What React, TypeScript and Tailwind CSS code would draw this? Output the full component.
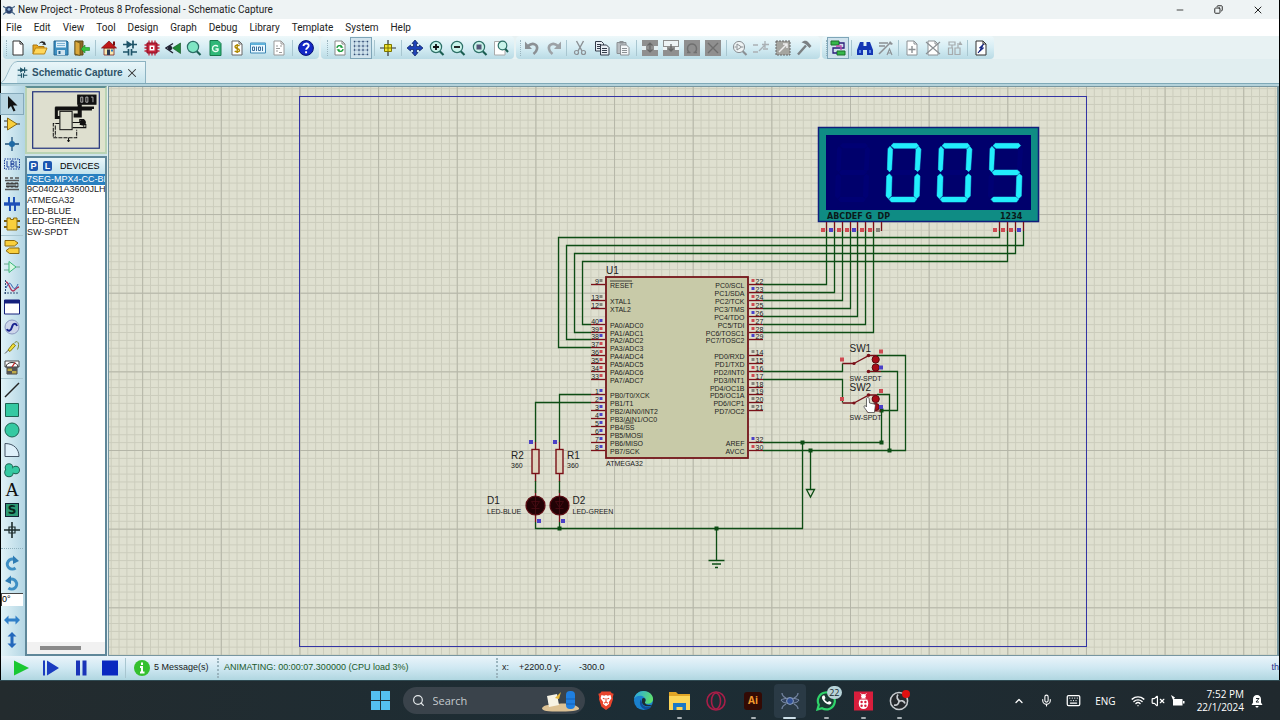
import React from "react";
import { Minus, Copy, X, Search, ChevronUp, Mic, Keyboard, Wifi, VolumeX } from "lucide-react";

type Kids = { children: React.ReactNode };

/* ---------- small icon helpers ---------- */
const Ic = ({ children, size = 16 }: Kids & { size?: number }) => (
  <svg width={size} height={size} viewBox="0 0 16 16" fill="none" className="shrink-0" aria-hidden="true">
    {children}
  </svg>
);

const Page = ({ stroke = "#333", children }: { stroke?: string; children?: React.ReactNode }) => (
  <Ic>
    <path d="M3 1h7l3 3v11H3z" fill="#fff" stroke={stroke} />
    <path d="M10 1v3h3" stroke={stroke} />
    {children}
  </Ic>
);

const Lens = ({ children, fill = "#c9f3ea" }: { children?: React.ReactNode; fill?: string }) => (
  <Ic>
    <path d="M10.5 11l4 4" stroke="#1b5e52" strokeWidth="2.2" />
    <circle cx="7" cy="7" r="5.6" fill={fill} stroke="#2c6f66" strokeWidth="1.2" />
    {children}
  </Ic>
);

const Caps = ({ size }: { size?: number }) => (
  <Ic size={size}>
    <path d="M1 4.500h14M1 12h5M10 12h5M6.500 9v6.500M9.500 9v6.500" stroke="#1e5468" strokeWidth="1.700" />
    <path d="M4.500 .5v8l6-4z" fill="#1e5468" />
    <path d="M11 .5v8" stroke="#1e5468" strokeWidth="1.700" />
  </Ic>
);

type Tool = { label: string; icon: React.ReactNode; active?: boolean } | "sep";

const groupA: Tool[] = [
  { label: "New project", icon: <Page /> },
  {
    label: "Open project",
    icon: (
      <Ic>
        <path d="M1 14V5h4l1.500 1.500H12V9" fill="#e9a91f" stroke="#a87512" />
        <path d="M1 14l2.500-6H15l-2.500 6z" fill="#ffd75a" stroke="#b98517" />
        <path d="M7 4c1-3 4-3.500 5.500-1.500V1l1.500 4-4-.5 1.500-1C10 2.500 8.500 2.500 7 4z" fill="#222" />
      </Ic>
    ),
  },
  {
    label: "Save project",
    icon: (
      <Ic>
        <path d="M1 1h13l1 1v13H1z" fill="#3d8fc0" stroke="#24658f" />
        <path d="M3 1.500h10v6H3z" fill="#dff0fa" />
        <path d="M4 3.500h8M4 5.500h8" stroke="#7fb4d3" />
        <path d="M4 10h8v5H4z" fill="#cfe3ef" />
        <path d="M5.500 11h2v3h-2z" fill="#24658f" />
      </Ic>
    ),
  },
  {
    label: "Close project",
    icon: (
      <Ic>
        <path d="M1 1h8v14H1z" fill="#8a6a24" stroke="#5f4a16" />
        <path d="M1 1l5 2v12.500L1 14z" fill="#d9a83c" stroke="#6b5418" strokeWidth=".8" />
        <path d="M7 9l4-4v2.500h4.500v3H11V13z" fill="#35c23e" stroke="#1d8a2a" strokeWidth=".6" />
      </Ic>
    ),
  },
  "sep",
  {
    label: "Home page",
    icon: (
      <Ic>
        <path d="M3 8h10v7H3z" fill="#f6e9b0" stroke="#7c2020" strokeWidth=".8" />
        <path d="M.5 8L8 1l7.500 7z" fill="#c01818" stroke="#7a0e0e" strokeWidth=".7" />
        <path d="M12 1.500h2v4h-2z" fill="#7a0e0e" />
        <path d="M6 9.500h3V15H6z" fill="#2c3a52" />
        <path d="M10 9.500h2v2h-2z" fill="#2b7bc0" />
      </Ic>
    ),
  },
  { label: "Schematic capture", icon: <Caps /> },
  {
    label: "PCB layout",
    icon: (
      <Ic>
        <path d="M5 .5v15M8 .5v15M11 .5v15M.5 5h15M.5 8h15M.5 11h15" stroke="#c2233a" strokeWidth="1.300" />
        <path d="M3 3h10v10H3z" fill="#c2233a" stroke="#8e1024" />
        <path d="M5.500 5.500h5v5h-5z" fill="#fff" />
        <path d="M7 7h2v2H7z" fill="#c2233a" />
      </Ic>
    ),
  },
  {
    label: "3D visualizer",
    icon: (
      <Ic>
        <path d="M7.500 8L15.500 3v10.500z" fill="#1f8a38" stroke="#0d4a1c" strokeWidth=".6" />
        <path d="M8 3.500L1 8l7 5" stroke="#223" strokeWidth="1.400" />
        <circle cx="5" cy="8" r="2.200" fill="#223" />
      </Ic>
    ),
  },
  { label: "Gerber viewer", icon: <Lens fill="#7fe6c4" /> },
  {
    label: "Design explorer",
    icon: (
      <Ic>
        <path d="M3 .5h8l3 3v12H3z" fill="#2fb878" stroke="#157a4b" />
        <path d="M11 6.500c-2-2-5.500-1-5.500 2s3.500 4 5.500 2V9H8.500" stroke="#eafff4" strokeWidth="1.400" />
      </Ic>
    ),
  },
  {
    label: "Bill of materials",
    icon: (
      <Page stroke="#666">
        <path d="M10.500 6C9 4.500 6 5 6 6.800 6 9 10.500 8 10.500 10.400c0 1.800-3.300 2-4.800.6M8.200 4v9" stroke="#b08a00" strokeWidth="1.400" />
      </Page>
    ),
  },
  {
    label: "Source code",
    icon: (
      <Ic>
        <path d="M.5 3h15v10H.5z" fill="#e8f8ff" stroke="#3c86b4" />
        <path d="M.5 3h15v2H.5z" fill="#5fb2da" />
        <path d="M2.500 7h2v3.500h-2zM6.500 6.500v4.500M8.500 7h2v3.500h-2zM12.500 6.500v4.500" stroke="#2a5f8f" strokeWidth=".9" />
      </Ic>
    ),
  },
  {
    label: "Project notes",
    icon: (
      <Page stroke="#999">
        <path d="M5 6h2M9 6h2M5 8.500h4M5 11h2M8 12.500h3" stroke="#999" />
      </Page>
    ),
  },
  "sep",
  {
    label: "Help",
    icon: (
      <Ic>
        <circle cx="8" cy="8" r="7.400" fill="#1428c8" stroke="#061070" />
        <path d="M5.500 6c0-3.200 5.200-3.200 5.200-.2 0 1.800-2.600 2-2.600 4M8.100 11.200v2" stroke="#fff" strokeWidth="1.900" />
      </Ic>
    ),
  },
];

const groupB: Tool[] = [
  {
    label: "Redraw",
    icon: (
      <Page stroke="#888">
        <path d="M5 8c0-2.500 3-3 4.500-1.500M11 9c0 2.500-3 3-4.500 1.500" stroke="#1c9c3c" strokeWidth="1.400" />
        <path d="M8.500 4.500l3 3-3 .5zM7.500 12.500l-3-3 3-.5z" fill="#1c9c3c" />
      </Page>
    ),
  },
  {
    label: "Toggle grid",
    active: true,
    icon: (
      <Ic>
        <path d="M1.500 1.500h13v13h-13zM1.500 6h13M1.500 10h13M6 1.500v13M10 1.500v13" stroke="#6f8cab" strokeDasharray="1 1" strokeWidth=".9" />
        {[1.5, 6, 10, 14.5].map((x) =>
          [1.5, 6, 10, 14.5].map((y) => <rect key={`${x}-${y}`} x={x - 0.7} y={y - 0.7} width="1.400" height="1.400" fill="#2e4670" />)
        )}
      </Ic>
    ),
  },
  "sep",
  {
    label: "Origin",
    icon: (
      <Ic>
        <path d="M8 0v16M0 8h16" stroke="#333" strokeWidth="1.200" />
        <path d="M4.500 4.500h7v7h-7z" fill="#f2e530" stroke="#7c7500" />
        <path d="M8 4v8M4 8h8" stroke="#7c7500" />
      </Ic>
    ),
  },
  "sep",
  {
    label: "Pan",
    icon: (
      <Ic>
        <path
          d="M8 0l3 3.500H9.500v3h3V5L16 8l-3.500 3V9.500h-3v3H11L8 16l-3-3.500h1.500v-3h-3V11L0 8l3.500-3v1.500h3v-3H5z"
          fill="#1f43b8"
          stroke="#0a1c60"
          strokeWidth=".7"
        />
      </Ic>
    ),
  },
  {
    label: "Zoom in",
    icon: (
      <Lens>
        <path d="M4 7h6M7 4v6" stroke="#111" strokeWidth="1.800" />
      </Lens>
    ),
  },
  {
    label: "Zoom out",
    icon: (
      <Lens>
        <path d="M4 7h6" stroke="#111" strokeWidth="1.800" />
      </Lens>
    ),
  },
  {
    label: "Zoom all",
    icon: (
      <Lens>
        <path d="M4.500 4.500h5v5h-5z" fill="#557" />
      </Lens>
    ),
  },
  {
    label: "Zoom area",
    icon: (
      <Ic>
        <path d="M1.500 1.500H12v13.500H1.500z" fill="#fff" stroke="#aaa" />
        <path d="M12 8.500l3 3.500" stroke="#1b5e52" strokeWidth="2" />
        <circle cx="9.500" cy="5.500" r="4.300" fill="#c9f3ea" stroke="#2c6f66" strokeWidth="1.200" />
      </Ic>
    ),
  },
];

const gray = "#8b9094";
const BlockBase = ({ children }: Kids) => (
  <Ic>
    <path d="M0 0h16v16H0z" fill="#8f8f8f" />
    {children}
  </Ic>
);

const groupC: Tool[] = [
  {
    label: "Undo",
    icon: (
      <Ic>
        <path d="M4 6c5-4.500 10-1 9 3-.4 2-1.500 3.500-3.500 5" stroke={gray} strokeWidth="2.600" />
        <path d="M1 1.500V9h7z" fill={gray} />
      </Ic>
    ),
  },
  {
    label: "Redo",
    icon: (
      <Ic>
        <path d="M12 6C7 1.500 2 5 3 9c.4 2 1.500 3.500 3.500 5" stroke="#9da2a6" strokeWidth="2.600" />
        <path d="M15 1.500V9H8z" fill="#9da2a6" />
      </Ic>
    ),
  },
  "sep",
  {
    label: "Cut",
    icon: (
      <Ic>
        <path d="M4.500 1l5.500 10M11.500 1L6 11" stroke={gray} strokeWidth="1.400" />
        <circle cx="4.500" cy="12.500" r="2" stroke={gray} strokeWidth="1.200" />
        <circle cx="11.500" cy="12.500" r="2" stroke={gray} strokeWidth="1.200" />
      </Ic>
    ),
  },
  {
    label: "Copy",
    icon: (
      <Ic>
        <path d="M1.500 1.500h6l2 2V11h-8z" fill="#e8eef4" stroke="#333c4a" />
        <path d="M3 4.500h4M3 6.500h4M3 8.500h3" stroke="#333c4a" />
        <path d="M6.500 5h6l2.500 2.500v7.500H6.500z" fill="#e8eef4" stroke="#333c4a" />
        <path d="M8 8.500h5M8 10.500h5M8 12.500h5" stroke="#333c4a" />
      </Ic>
    ),
  },
  {
    label: "Paste",
    icon: (
      <Ic>
        <path d="M2 2.500h9v11H2z" fill="#b9bec2" stroke={gray} />
        <path d="M4.500 1h4v2.500h-4z" fill={gray} />
        <path d="M5.500 5h6l2.500 2.500V15H5.500z" fill="#f3f6f8" stroke={gray} />
        <path d="M7 8.500h5M7 10.500h5M7 12.500h5" stroke={gray} />
      </Ic>
    ),
  },
  "sep",
  {
    label: "Block copy",
    icon: (
      <BlockBase>
        <path d="M0 6h4v4H0zM12 6h4v4h-4z" fill="#e3edf0" />
        <path d="M8 3v9M5.500 5.500L8 3l2.500 2.500M5.500 9.500L8 12l2.500-2.500" stroke="#666" strokeWidth="1.200" />
      </BlockBase>
    ),
  },
  {
    label: "Block move",
    icon: (
      <BlockBase>
        <path d="M1 1h14v5H1zM0 7h4v3H0zM12 7h4v3h-4z" fill="#eef3f5" />
        <path d="M8 4v7M5.500 8.500L8 11l2.500-2.500" stroke="#666" strokeWidth="1.300" />
      </BlockBase>
    ),
  },
  {
    label: "Block rotate",
    icon: (
      <BlockBase>
        <path d="M5 12C2.500 10 3 4 8 4s5.500 6 3 8M3 12.500h3.500M9.500 12.500H13" stroke="#707070" strokeWidth="1.400" />
      </BlockBase>
    ),
  },
  {
    label: "Block delete",
    icon: (
      <BlockBase>
        <path d="M3 3l10 10M13 3L3 13" stroke="#6e6e6e" strokeWidth="1.400" />
      </BlockBase>
    ),
  },
  "sep",
  {
    label: "Pick parts",
    icon: (
      <Ic>
        <path d="M10.500 11l4 4" stroke={gray} strokeWidth="2.200" />
        <circle cx="7" cy="7" r="5.600" fill="#eef3f4" stroke={gray} />
        <path d="M2.500 7h2M9.500 7h2M5 4v6l4.500-3z" stroke={gray} />
      </Ic>
    ),
  },
  {
    label: "Make device",
    icon: (
      <Ic>
        <path d="M0 5h5M0 12h5M10 9h5" stroke="#aab0b4" strokeWidth="1.300" />
        <path d="M6 11l6-6M12 1v7M9 4.500h7" stroke="#aab0b4" strokeWidth="1.300" />
      </Ic>
    ),
  },
  {
    label: "Packaging tool",
    icon: (
      <Ic>
        <path d="M1 1h14v14H1z" fill="#a5a5a0" stroke="#666" strokeDasharray="2 1" />
        <path d="M4 12L12 4M12 8V4H8" stroke="#eee" strokeWidth="1.500" />
      </Ic>
    ),
  },
  {
    label: "Decompose",
    icon: (
      <Ic>
        <path d="M2 14.500L10 5.500" stroke="#7b8083" strokeWidth="2.400" />
        <path d="M5.500 2.500C8 0 11 .5 12.500 2.500L15.500 6l-2 2-3.500-3.500C8.500 3 7 3 5.500 2.500z" fill="#7b8083" />
      </Ic>
    ),
  },
];

const groupD: Tool[] = [
  {
    label: "Wire autorouter",
    active: true,
    icon: (
      <Ic>
        <path d="M1 1h8v4H1zM7 11h8v4H7z" fill="#35b84a" stroke="#1c6e2a" />
        <path d="M9 3h5v5H3v5h4" stroke="#2b1d7a" strokeWidth="1.300" />
        <path d="M6 6h5v4" stroke="#c44aa8" strokeWidth="1.300" />
      </Ic>
    ),
  },
  "sep",
  {
    label: "Search and tag",
    icon: (
      <Ic>
        <path d="M3 2h3.500v4h3V2H13l3 8v5h-6v-5H6v5H0v-5z" fill="#1437b4" />
        <path d="M2 10h2v3H2zM12 10h2v3h-2z" fill="#5c86e8" />
      </Ic>
    ),
  },
  {
    label: "Property assignment",
    icon: (
      <Ic>
        <path d="M1 3h9M1 6h6M1 14L12 3" stroke={gray} strokeWidth="1.500" />
        <path d="M9 15l2.500-6 2.500 6M10 13h3" stroke={gray} strokeWidth="1.100" />
        <path d="M12 1l3 3-2 1-2-2z" fill={gray} />
      </Ic>
    ),
  },
  "sep",
  {
    label: "New sheet",
    icon: (
      <Page stroke={gray}>
        <path d="M8 6v7M4.500 9.500h7" stroke={gray} strokeWidth="1.400" />
      </Page>
    ),
  },
  {
    label: "Delete sheet",
    icon: (
      <Page stroke={gray}>
        <path d="M1 2l14 12M15 2L1 14" stroke={gray} strokeWidth="1.200" />
      </Page>
    ),
  },
  {
    label: "Exit to parent",
    icon: (
      <Ic>
        <path d="M1.500 8h4v6.500h-4zM8 8h5v6.500H8zM2 2h6v3H2zM5 5v3M11 8V3" stroke="#a6abad" strokeWidth="1.200" />
        <path d="M13 1l2.500 4h-4z" fill="#a6abad" />
      </Ic>
    ),
  },
  "sep",
  {
    label: "Electrical rules check",
    icon: (
      <Page>
        <path d="M10.500 4L6.500 8h2L5 13l5.500-5h-2z" fill="#1437b4" stroke="#10207a" />
      </Page>
    ),
  },
];

const ToolGroup = ({ tools, box }: { tools: Tool[]; box: string }) => (
  <div
    role="toolbar"
    className={`${box} flex shrink-0 items-center justify-between rounded-sm bg-linear-to-b from-[#eef8fa] via-[#d6edf4] to-[#b9dbe5]`}
  >
    <span className="h-4 w-0 border-l border-dotted border-[#9ab4be]" />
    {tools.map((t, i) =>
      t === "sep" ? (
        <span key={i} className="flex h-4 w-1 justify-center">
          <span className="w-px bg-[#a8c6d0]" />
        </span>
      ) : (
        <button
          key={i}
          aria-label={t.label}
          className={
            t.active
              ? "flex h-5 w-5 items-center justify-center bg-[#cfe2ec] outline outline-[#7fa5b8]"
              : "flex h-5 w-5 items-center justify-center"
          }
        >
          {t.icon}
        </button>
      )
    )}
  </div>
);

/* ---------- left mode bar ---------- */
const green = "#35c9a2";
const modeA: [string, React.ReactNode][] = [
  ["Selection mode", <Ic><path d="M4 0v13l3-3 2.500 5.500 2-1L9 9.500h4.500z" fill="#111" /></Ic>],
  ["Component mode", <Ic><path d="M0 5h4M0 11h4M12 8h4" stroke="#333" /><path d="M3.500 2v12L13 8z" fill="#f9cf3c" stroke="#8a6a10" /></Ic>],
  ["Junction dot mode", <Ic><path d="M8 1v14M1 8h14" stroke="#1d4f78" strokeWidth="1.300" /><circle cx="8" cy="8" r="3" fill="#1e6aa5" /></Ic>],
  [
    "Wire label mode",
    <Ic>
      <path d="M.5 3h15v10H.5z" stroke="#1b3f9a" strokeDasharray="1.500 1" />
      <path d="M3 5v6h2.500M7 5v6h2c1.500 0 1.500-3 0-3H7h2c1.300 0 1.300-3 0-3zM12 5v6h2.500" stroke="#1b3f9a" />
    </Ic>,
  ],
  ["Text script mode", <Ic><path d="M1 2h3M6 2h3M11 2h4M1 4.500h14M2 7.500h12M2 10.500h12M1 13.500h14" stroke="#555" strokeWidth="1.300" /><path d="M3 7h2v4H3zM7 7h2v4H7zM11 7h3v4h-3z" stroke="#333" strokeWidth=".8" /></Ic>],
  ["Buses mode", <Ic><path d="M0 8h16" stroke="#1d50b8" strokeWidth="3.400" /><path d="M5 1v6M10 1v6M6 9v6M11 9v6" stroke="#1d50b8" strokeWidth="2" /></Ic>],
  ["Subcircuit mode", <Ic><path d="M0 5h16M0 11h16" stroke="#7a5c08" strokeWidth="2" /><path d="M3 2h3.500v1.500h3V2H13v12H3z" fill="#f9cf3c" stroke="#8a6a10" /></Ic>],
];
const modeB: [string, React.ReactNode][] = [
  ["Terminals mode", <Ic><path d="M1 1.500h9.500L14 4l-3.500 3H1zM15 9H5.500L2 11.700 5.500 14.500H15z" fill="#f9cf3c" stroke="#8a6a10" /></Ic>],
  ["Device pins mode", <Ic><path d="M0 5h5M0 11h5M12 8h4" stroke="#6aa88e" /><path d="M5 2.500v11L12 8z" fill="#d8f8e4" stroke="#38b878" /></Ic>],
  ["Graph mode", <Ic><path d="M1.500 1v14M0 14h15" stroke="#33507a" strokeDasharray="2 1" /><path d="M2 3c3 0 4 9 7 9 2 0 3-4 6-4" stroke="#b03058" strokeWidth="1.300" /><path d="M2 9c3-6 4-6 6-2s4 3 6-2" stroke="#2f5fb0" /></Ic>],
  ["Active popup mode", <Ic><path d="M.5 1h15v14H.5z" fill="#fff" stroke="#14207c" /><path d="M.5 1h15v3.500H.5z" fill="#14207c" /></Ic>],
  ["Generator mode", <Ic><circle cx="8" cy="8" r="7" fill="#cdd6ea" stroke="#8b98c0" /><path d="M3 10c1 3 4 2 5-2s4-4 5-1" stroke="#1a2590" strokeWidth="2" /></Ic>],
  ["Probe mode", <Ic><path d="M1 14.500l4-4" stroke="#555" /><path d="M4 11L9 4.500l2.500 2L6 12.500z" fill="#f0df3a" stroke="#8a7c10" /><path d="M10 4.500c4-5 6 1 3.500 6" stroke="#7b8b3a" /></Ic>],
  ["Instruments mode", <Ic><path d="M1 2h14v6H1z" fill="#fff" stroke="#444" /><path d="M2 8C2 2 14 2 14 8z" fill="#fff" stroke="#333" /><path d="M8 8l3-4.500" stroke="#c02020" strokeWidth="1.300" /><path d="M3 9h10v6H3z" fill="#bda94a" stroke="#444" /><path d="M8 9h5v3H8zM3 12h5v3H3z" fill="#555" /></Ic>],
];
const modeC: [string, React.ReactNode][] = [
  ["Line mode", <Ic><path d="M1 15L15 1" stroke="#222" strokeWidth="1.500" /></Ic>],
  ["Box mode", <Ic><path d="M1.500 1.500h13v13h-13z" fill={green} stroke="#1e6452" /></Ic>],
  ["Circle mode", <Ic><circle cx="8" cy="8" r="7" fill={green} stroke="#1e6452" /></Ic>],
  ["Arc mode", <Ic><path d="M1 1.500v13h14C15 7 10 1.500 1 1.500z" fill="#dff0fa" stroke="#456" /></Ic>],
  [
    "Closed path mode",
    <Ic>
      <g stroke="#1e6452" strokeWidth="2">
        <circle cx="5" cy="5.500" r="3.300" />
        <circle cx="5" cy="10.500" r="3.800" />
        <circle cx="11.700" cy="8" r="3.300" />
      </g>
      <g fill={green}>
        <circle cx="5" cy="5.500" r="3.300" />
        <circle cx="5" cy="10.500" r="3.800" />
        <circle cx="11.700" cy="8" r="3.300" />
        <path d="M5 6.500h5v4H5z" />
      </g>
    </Ic>,
  ],
  ["Text mode", <span className="font-['Liberation_Serif',serif] text-[19px] leading-5 text-[#111]">A</span>],
  ["Symbols mode", <span className="flex h-3.5 w-3.5 items-center justify-center border border-[#123] bg-[#2d9a74] font-['DejaVu_Sans',sans-serif] text-[12px] leading-3 font-bold text-[#06251a]">S</span>],
  ["Markers mode", <Ic><path d="M8 0v16M0 8h16" stroke="#1c2b2b" strokeWidth="1.600" /><path d="M5 5h6v6H5z" stroke="#1c2b2b" strokeWidth="1.200" /></Ic>],
];
const RotateArrow = () => (
  <Ic>
    <path d="M11.500 13A5 5 0 1 1 10.500 4.600" stroke="#3f8fc4" strokeWidth="3" />
    <path d="M9 .5l6 5.500-6 3z" fill="#2f7cb4" />
  </Ic>
);

const ModeList = ({ items }: { items: [string, React.ReactNode][] }) => (
  <div className="flex flex-col">
    {items.map(([label, icon]) => (
      <button
        key={label}
        aria-label={label}
        className={
          label === "Selection mode"
            ? "flex h-5 items-center justify-center bg-[#b7d5e2] outline outline-[#86aabb]"
            : "flex h-5 items-center justify-center"
        }
      >
        {icon}
      </button>
    ))}
  </div>
);

const ModeBar = () => (
  <nav aria-label="Modes" className="flex w-6 shrink-0 flex-col bg-linear-to-r from-[#e0f2f7] to-[#b4d6e4] pt-2 pr-[2px]">
    <ModeList items={modeA} />
    <hr className="my-px border-[#a8c6d0]" />
    <ModeList items={modeB} />
    <hr className="my-px border-[#a8c6d0]" />
    <ModeList items={modeC} />
    <hr className="mt-2 mb-1 border-dotted border-[#8fb0bd]" />
    <button aria-label="Rotate clockwise" className="flex h-5 items-center justify-center">
      <RotateArrow />
    </button>
    <button aria-label="Rotate anti-clockwise" className="flex h-5 -scale-x-100 items-center justify-center">
      <RotateArrow />
    </button>
    <input
      aria-label="Rotation angle"
      defaultValue="0°"
      className="h-[13px] w-full border-t border-l border-[#444] bg-white font-['Liberation_Sans',sans-serif] text-[9px] text-black outline-none"
    />
    <button aria-label="Mirror horizontally" className="mt-1 flex h-5 items-center justify-center">
      <Ic><path d="M0 8l4.500-4.500v3h7v-3L16 8l-4.500 4.500v-3h-7v3z" fill="#2f7fc8" /></Ic>
    </button>
    <button aria-label="Mirror vertically" className="flex h-5 items-center justify-center">
      <Ic><path d="M8 0l4.500 4.500h-3v7h3L8 16l-4.500-4.500h3v-7h-3z" fill="#2468bc" /></Ic>
    </button>
  </nav>
);

/* ---------- side panel ---------- */
const devices = ["7SEG-MPX4-CC-BL", "9C04021A3600JLH", "ATMEGA32", "LED-BLUE", "LED-GREEN", "SW-SPDT"];

const Overview = () => (
  <div className="h-[68px] border-2 border-[#b9d3b4] border-t-[#5f8f93] bg-[#dfe3cd] px-[4px] py-[3px]">
    <svg viewBox="0 0 67 57" className="h-full w-full" aria-label="Sheet overview">
      <rect x=".75" y=".75" width="65.500" height="55.500" fill="#dedfcf" stroke="#24337c" strokeWidth="1.200" />
      <g stroke="#111" fill="none" strokeWidth="1">
        <rect x="45" y="4" width="18" height="9" fill="#111" />
        <path d="M48 6h2v5h-2zM53 6h2v5h-2zM58 6h2v5" stroke="#ccc" strokeWidth=".8" />
        <path d="M23 16.500h38M23 18h36" strokeWidth="2.500" />
        <path d="M24 16v10h4" strokeWidth="3" />
        <path d="M47 13v11h-6" strokeWidth="4" />
        <rect x="27.500" y="20" width="12" height="18" fill="#dedfcf" />
        <path d="M40 31h7v-3h4v8H40M47 33h6v3h-5" />
        <circle cx="50" cy="31" r="2.500" fill="#111" />
        <path d="M27 32h-6v13M23 34v11M21 46h23v-8" strokeDasharray="4 1" />
        <path d="M36 46v4M34.500 49h3" />
      </g>
    </svg>
  </div>
);

const SidePanel = () => (
  <aside className="flex w-[82px] shrink-0 flex-col gap-[2px] bg-[#cde3ea] font-['Liberation_Sans',sans-serif] text-[9px]">
    <Overview />
    <section className="flex flex-1 flex-col border-2 border-[#5f8799] bg-white">
      <header className="flex h-4 items-center gap-[4px] bg-linear-to-b from-[#e8f5f9] to-[#c3e2ec] px-[2px] text-black">
        <button aria-label="Pick devices" className="h-[10px] w-[9px] rounded-[2px] bg-[#1c56b0] text-[9px] leading-[10px] font-bold text-white">P</button>
        <button aria-label="Manage libraries" className="ml-px h-[10px] w-[9px] rounded-[2px] bg-[#1c56b0] text-[9px] leading-[10px] font-bold text-white">L</button>
        <h2 className="ml-1 text-[9px] leading-3">DEVICES</h2>
      </header>
      <ul className="grid h-16 grid-rows-6 text-[#222]">
        {devices.map((d, i) => (
          <li
            key={d}
            className={
              i === 0
                ? "flex items-center overflow-hidden bg-[#2a80c0] leading-none whitespace-nowrap text-white"
                : "flex items-center overflow-hidden leading-none whitespace-nowrap"
            }
          >
            {d}
          </li>
        ))}
      </ul>
      <div className="mt-auto flex h-3 items-center bg-[#f1f1f1] pl-[13px]">
        <span className="h-1 w-[41px] bg-[#8a8a8a]" />
      </div>
    </section>
  </aside>
);

/* ---------- schematic ---------- */
const G = 7.865;
const px = (n: number) => Math.floor(850 + G * n) + 0.5;
const py = (n: number) => Math.floor(450 - G * n) + 0.5;

const RED = "#cf4a52";
const BLU = "#4a40c8";
const GRY = "#85837a";
const WIRE = "#0d4d14";
const PIN = "#7a1018";

type Pin = [string, number, string, string];
const leftPins: Pin[] = [
  ["9", 21, "RESET", GRY], ["13", 19, "XTAL1", GRY], ["12", 18, "XTAL2", GRY],
  ["40", 16, "PA0/ADC0", BLU], ["39", 15, "PA1/ADC1", RED], ["38", 14, "PA2/ADC2", BLU], ["37", 13, "PA3/ADC3", RED],
  ["36", 12, "PA4/ADC4", RED], ["35", 11, "PA5/ADC5", RED], ["34", 10, "PA6/ADC6", RED], ["33", 9, "PA7/ADC7", RED],
  ["1", 7, "PB0/T0/XCK", BLU], ["2", 6, "PB1/T1", BLU], ["3", 5, "PB2/AIN0/INT2", BLU], ["4", 4, "PB3/AIN1/OC0", BLU],
  ["5", 3, "PB4/SS", BLU], ["6", 2, "PB5/MOSI", BLU], ["7", 1, "PB6/MISO", BLU], ["8", 0, "PB7/SCK", BLU],
];
const rightPins: Pin[] = [
  ["22", 21, "PC0/SCL", RED], ["23", 20, "PC1/SDA", BLU], ["24", 19, "PC2/TCK", RED], ["25", 18, "PC3/TMS", RED],
  ["26", 17, "PC4/TDO", BLU], ["27", 16, "PC5/TDI", RED], ["28", 15, "PC6/TOSC1", RED], ["29", 14, "PC7/TOSC2", BLU],
  ["14", 12, "PD0/RXD", GRY], ["15", 11, "PD1/TXD", GRY], ["16", 10, "PD2/INT0", RED], ["17", 9, "PD3/INT1", RED],
  ["18", 8, "PD4/OC1B", GRY], ["19", 7, "PD5/OC1A", GRY], ["20", 6, "PD6/ICP1", GRY], ["21", 5, "PD7/OC2", GRY],
  ["32", 1, "AREF", BLU], ["30", 0, "AVCC", RED],
];

const Sq = ({ x, y, c, s = 4 }: { x: number; y: number; c: string; s?: number }) => (
  <rect x={x - s / 2} y={y - s / 2} width={s} height={s} fill={c} />
);
const Node = ({ x, y }: { x: number; y: number }) => <rect x={x - 2} y={y - 2} width="4" height="4" fill={WIRE} />;

const SEG: Record<string, string> = {
  a: "22,2 92,2 98,9 90,17 24,17 15,9",
  b: "98,11 105,20 101,80 94,88 87,80 90,20",
  c: "94,93 102,100 100,160 92,168 84,160 86,102",
  d: "9,170 16,163 84,163 92,170 86,178 16,178",
  e: "10,93 18,102 16,160 7,168 0,160 2,100",
  f: "12,11 20,20 17,80 11,88 4,80 6,18",
  g: "12,89 20,82 88,82 96,89 88,97 18,97",
};
const digitSegs = ["", "abcdef", "abcdef", "afgcd"];

const Display = () => (
  <g>
    <rect x="818.500" y="127.500" width="220" height="94" fill="#0f8c84" stroke="#101e7c" strokeWidth="1.500" />
    <rect x="826" y="135" width="205" height="75" fill="#00006c" />
    {digitSegs.map((on, i) => (
      <g key={i} transform={`translate(${835 + 51 * i} 142.700) scale(.3333)`}>
        {Object.keys(SEG).map((s) =>
          on.includes(s) ? (
            <polygon key={s} points={SEG[s]} fill="#22eefc" stroke="#22eefc" strokeWidth="1.500" strokeLinejoin="round" />
          ) : (
            <polygon key={s} points={SEG[s]} fill="#000074" />
          )
        )}
      </g>
    ))}
    <g className="font-['DejaVu_Sans',sans-serif] text-[8px] font-bold" fill="#0a1a1a">
      <text x="827" y="218.500">ABCDEF</text>
      <text x="865.500" y="218.500">G</text>
      <text x="877.500" y="218.500">DP</text>
      <text x="1000" y="218.500">1234</text>
    </g>
    {[RED, BLU, RED, RED, BLU, RED, RED, GRY].map((c, i) => (
      <g key={i}>
        <path d={`M${px(i - 3)} 222V231`} stroke={PIN} strokeWidth="1.300" />
        <Sq x={823 + Math.round(G * i)} y={230} c={c} />
      </g>
    ))}
    {[RED, RED, RED, BLU].map((c, i) => (
      <g key={i}>
        <path d={`M${px(19 + i)} 222V231`} stroke={PIN} strokeWidth="1.300" />
        <Sq x={995 + Math.round(G * i)} y={230} c={c} />
      </g>
    ))}
  </g>
);

const Switch = ({ y, name }: { y: number; name: string }) => (
  <g>
    <path d={`M842.500 ${y + 8}h11M854 ${y + 8}l15-8h8`} stroke={PIN} strokeWidth="1.400" fill="none" />
    <circle cx="854" cy={y + 8} r="1.600" fill={PIN} />
    <circle cx="868.500" cy={y} r="1.800" fill={PIN} />
    <circle cx="868.500" cy={y + 16} r="1.800" fill={PIN} />
    <path d={`M868 ${y + 16}h13`} stroke={PIN} />
    <circle cx="875.700" cy={y + 4} r="3.600" fill="#a80c18" stroke="#5a0810" />
    <circle cx="875.700" cy={y + 12} r="3.600" fill="#a80c18" stroke="#5a0810" />
    <Sq x={842} y={y + 4} c={RED} />
    <Sq x={881} y={y - 4} c={RED} />
    <Sq x={881} y={y + 12} c={BLU} />
    <text x="849.500" y={y - 4} className="text-[10px]">{name}</text>
    <text x="849.500" y={y + 25} className="text-[7px]">SW-SPDT</text>
  </g>
);

const Branch = ({ x, r, d, rx, dx, led }: { x: number; r: string; d: string; rx: number; dx: number; led: string }) => (
  <g>
    <path d={`M${x} 442v40M${x} 490v32`} stroke={PIN} strokeWidth="1.300" />
    <path d={`M${x} 481v12`} stroke={WIRE} strokeWidth="1.300" />
    <rect x={x - 3.5} y="449.500" width="7" height="24" fill="#ded3bd" stroke={PIN} strokeWidth="1.400" />
    <circle cx={x} cy="505.500" r="9.500" fill="#220205" stroke="#5c0c14" strokeWidth="1.200" />
    <path d={`M${x - 4} 501.500h8l-4 6zM${x - 4} 508.500h8M${x} 497v17`} stroke="#4a0c14" strokeWidth=".8" fill="none" />
    <Sq x={x - 4.5} y={442} c={BLU} />
    <Sq x={x + 3.5} y={521} c={BLU} />
    <text x={rx} y="459" className="text-[10px]">{r}</text>
    <text x={rx} y="468" className="text-[7px]">360</text>
    <text x={dx} y="504" className="text-[10px]">{d}</text>
    <text x={dx} y="513.500" className="text-[7px]">{led}</text>
  </g>
);

const Schematic = () => (
  <svg
    viewBox="109 87 1168 568"
    className="block h-full w-full bg-[#dfe0d0] font-['Liberation_Sans',sans-serif]"
    role="img"
    aria-label="Schematic sheet"
  >
    <defs>
      <pattern id="minor" width={G} height={G} x="850" y="450" patternUnits="userSpaceOnUse">
        <path d={`M0 .5H${G}M.5 0V${G}`} stroke="#cbccbc" strokeWidth="1" />
      </pattern>
      <pattern id="major" width={G * 10} height={G * 10} x="850" y="450" patternUnits="userSpaceOnUse">
        <path d={`M0 .5H${G * 10}M.5 0V${G * 10}`} stroke="#b5b6a8" strokeWidth="1" />
      </pattern>
    </defs>
    <rect x="-1000" y="-1000" width="4000" height="3000" fill="url(#minor)" />
    <rect x="-1000" y="-1000" width="4000" height="3000" fill="url(#major)" />
    <rect x="299.500" y="96.500" width="787" height="550" fill="none" stroke="#3434a4" />

    <g fill="none" stroke={WIRE} strokeWidth="1.300">
      {[0, 1, 2, 3, 4, 5, 6].map((i) => (
        <path key={i} d={`M763 ${py(21 - i)}H${px(i - 3)}V231`} />
      ))}
      <path d={`M${px(19)} 231V${py(27)}H${px(-37)}V${py(13)}H591`} />
      <path d={`M${px(22)} 231V${py(26)}H${px(-36)}V${py(14)}H591`} />
      <path d={`M${px(21)} 231V${py(25)}H${px(-35)}V${py(15)}H591`} />
      <path d={`M${px(20)} 231V${py(24)}H${px(-34)}V${py(16)}H591`} />
      <path d={`M763 ${py(10)}H842.500V${py(11)}`} />
      <path d={`M763 ${py(9)}H842.500V${py(6)}`} />
      <path d={`M877 ${py(12)}H${px(7)}V${py(0)}H763`} />
      <path d={`M877 ${py(7)}H${px(5)}V${py(0)}`} />
      <path d={`M870 ${py(10)}H${px(6)}V${py(5)}H${px(4)}V${py(1)}H763`} />
      <path d={`M${px(-6)} ${py(1)}V${py(-10)}H535.500V522`} />
      <path d={`M559.500 522V${py(-10)}`} />
      <path d={`M591 ${py(7)}H559.500V442`} />
      <path d={`M591 ${py(6)}H535.500V442`} />
      <path d={`M${px(-5)} ${py(0)}V489M806.500 489.500h8l-4 7.500z`} />
      <path d={`M716.500 ${py(-10)}V560M708.500 560.500h16M712 564h9M715 567.500h3`} />
    </g>
    <Node x={802.5} y={442.5} />
    <Node x={810.5} y={450.5} />
    <Node x={881.5} y={442.5} />
    <Node x={889.5} y={450.5} />
    <Node x={881.5} y={410.5} />
    <Node x={716.5} y={528.5} />
    <Node x={559.5} y={528.5} />

    <Display />

    <rect x="606" y="277" width="142" height="181" fill="#c8caa8" stroke="#74161a" strokeWidth="1.800" />
    <g fill="#222" className="text-[7px]">
      {leftPins.map(([num, n, label, c]) => (
        <g key={num}>
          <path d={`M591 ${py(n)}H605`} stroke={PIN} strokeWidth="1.300" />
          <text x="599" y={py(n) - 1} textAnchor="end">{num}</text>
          <Sq x={601} y={py(n) - 4} c={c} s={3} />
          <text x="610" y={py(n) + 3}>{label}</text>
        </g>
      ))}
      {rightPins.map(([num, n, label, c]) => (
        <g key={num}>
          <path d={`M749 ${py(n)}H763`} stroke={PIN} strokeWidth="1.300" />
          <text x="755.500" y={py(n) - 1}>{num}</text>
          <Sq x={753} y={py(n) - 4} c={c} s={3} />
          <text x="744.500" y={py(n) + 3} textAnchor="end">{label}</text>
        </g>
      ))}
      <path d={`M610 ${py(21) - 3.5}h22M624.500 ${py(3) - 3.5}h9`} stroke="#222" strokeWidth=".8" />
      <text x="606" y="274" className="text-[10px]">U1</text>
      <text x="606" y="465.500">ATMEGA32</text>
      <Branch x={535.5} r="R2" d="D1" rx={511} dx={487} led="LED-BLUE" />
      <Branch x={559.5} r="R1" d="D2" rx={567} dx={572.5} led="LED-GREEN" />
      <Switch y={355.5} name="SW1" />
      <Switch y={395} name="SW2" />
    </g>
    <path
      d="M866.500 399c0-2 2.600-2 2.700 0l.3 4 4.500 1c1.200.3 1.500 1 1.300 2l-.9 6.500h-6.500l-3.600-5c-.9-1.400.5-2.400 1.600-1.400l.6.800z"
      fill="#fff"
      stroke="#333"
      strokeWidth=".7"
    />
  </svg>
);

/* ---------- window chrome ---------- */
const menus = ["File", "Edit", "View", "Tool", "Design", "Graph", "Debug", "Library", "Template", "System", "Help"];

const TitleBar = () => (
  <header className="flex h-[19px] items-center bg-[#eef3f4] pl-[2px] font-['Roboto',sans-serif] text-[10px] text-[#222]">
    <Ic size={12}>
      <circle cx="8" cy="8" r="5" fill="#2a3f6a" />
      <path d="M0 3l5 3M16 3l-5 3M0 14l5-4M16 14l-5-4" stroke="#4a6a8a" strokeWidth="1.600" />
      <circle cx="8" cy="7" r="2" fill="#8ab0d8" />
    </Ic>
    <h1 className="ml-[3px] leading-4">New Project - Proteus 8 Professional - Schematic Capture</h1>
    <div className="ml-auto flex items-center pr-[2px]">
      <button aria-label="Minimize" className="flex w-[39px] justify-center"><Minus size={10} strokeWidth={2} /></button>
      <button aria-label="Restore" className="flex w-[39px] justify-center"><Copy size={9} strokeWidth={2.5} className="-scale-x-100" /></button>
      <button aria-label="Close" className="flex w-[39px] justify-center"><X size={12} strokeWidth={2} /></button>
    </div>
  </header>
);

const MenuBar = () => (
  <nav aria-label="Main menu" className="flex h-[17px] items-center gap-[12px] bg-white pl-[5px] font-['Roboto',sans-serif] text-[10px] leading-4 text-[#222]">
    {menus.map((m) => (
      <button key={m}>{m}</button>
    ))}
  </nav>
);

const TabStrip = () => (
  <div className="flex h-[25px] items-end border-b border-[#7fa9b8] bg-[#e1eef0]">
    <svg width="16" height="22" viewBox="0 0 16 22" aria-hidden="true">
      <path d="M0 22C7 18 8 1 16 .5V22z" fill="#e3f2f6" />
      <path d="M0 22C7 18 8 1 16 .5" fill="none" stroke="#9dbecb" />
    </svg>
    <div className="flex h-[22px] w-[129px] items-center border-t border-r border-[#8db3c2] bg-linear-to-b from-[#eaf6f9] to-[#c5e3ec]">
      <Caps size={11} />
      <span className="ml-[4px] font-['Liberation_Sans',sans-serif] text-[10px] font-bold whitespace-nowrap text-[#2e5368]">Schematic Capture</span>
      <button aria-label="Close tab" className="ml-auto pr-[6px] text-[#333]"><X size={14} strokeWidth={1.8} /></button>
    </div>
  </div>
);

const Grip = () => <span className="h-5 w-0 shrink-0 border-l-2 border-dotted border-[#9ab4be]" />;

const StatusBar = () => (
  <footer className="flex h-[24px] items-center overflow-hidden bg-linear-to-b from-[#eaf4fa] via-[#cfe8f2] to-[#b0d6e0] font-['Liberation_Sans',sans-serif] text-[9px] whitespace-nowrap text-[#1a1a1a]">
    <div className="flex w-[216px] items-center pl-[5px]">
      <button aria-label="Run" className="flex w-[30px] justify-center"><Ic><path d="M1 .5L16 8 1 15.500z" fill="#19c832" /></Ic></button>
      <button aria-label="Step" className="flex w-[30px] justify-center"><Ic><path d="M0 .5h2v15H0zM4 .5L16 8 4 15.500z" fill="#1a3cc0" /></Ic></button>
      <button aria-label="Pause" className="flex w-[29px] justify-center"><Ic><path d="M3 .5h4v15H3zM9.500 .5h4v15h-4z" fill="#1a34b8" /></Ic></button>
      <button aria-label="Stop" className="flex w-[30px] justify-center"><Ic><path d="M0 .5h16v15H0z" fill="#0a28c0" /></Ic></button>
      <span className="h-5 w-px bg-[#a8c6d0]" />
      <button className="ml-[8px] flex items-center gap-[4px]">
        <Ic>
          <circle cx="8" cy="8" r="8" fill="#35c02f" />
          <path d="M8 2.500v2.500M6 7h2v5.500M6 12.500h4.500" stroke="#fff" strokeWidth="2" />
        </Ic>
        5 Message(s)
      </button>
    </div>
    <Grip />
    <p className="w-[277px] pl-[5px] text-[#1d5a2a]">ANIMATING: 00:00:07.300000 (CPU load 3%)</p>
    <Grip />
    <dl className="flex pl-[4px]">
      <dt className="w-[17px]">x:</dt>
      <dd className="w-[35px]">+2200.0</dd>
      <dt className="w-[25px]">y:</dt>
      <dd>-300.0</dd>
    </dl>
    <span className="ml-auto text-[#2a2a8a]">th</span>
  </footer>
);

/* ---------- taskbar ---------- */
const apps: { name: string; icon: React.ReactNode; mark?: "dot" | "active"; badge?: string }[] = [
  {
    name: "Brave",
    icon: (
      <svg width="18" height="21" viewBox="0 0 20 22" aria-hidden="true">
        <path d="M5 1h10l1.500 2 2 .5-1 4 .3 2L15 18l-5 3.500L5 18 2.200 9.500l.3-2-1-4 2-.5z" fill="#e8442c" />
        <path d="M5 5l3 .7 2-.7 2 .7 3-.7 1 3.500-3 4.500.5 1.500L10 17.500 6.500 14.500 7 13 4 8.500z" fill="#fff" />
        <path d="M6.500 8.500l2 .8M13.500 8.500l-2 .8M10 8.500v4M8 14l2-1.500 2 1.500" stroke="#e8442c" strokeWidth="1.200" fill="none" />
      </svg>
    ),
  },
  {
    name: "Edge",
    icon: (
      <svg width="21" height="21" viewBox="0 0 22 22" aria-hidden="true">
        <defs>
          <linearGradient id="edgeTop" x1="0" x2="1" y1=".2" y2=".5">
            <stop offset="0" stopColor="#2ba6e4" />
            <stop offset="1" stopColor="#5fe06a" />
          </linearGradient>
        </defs>
        <circle cx="11" cy="11" r="10" fill="#1a80cc" />
        <path d="M1 10C2 4 6 1 11 1c6 0 10 4 10 8.500 0 3.500-3 5-5.500 5-2 0-3-.8-3-1.500 0-.6.7-1 .7-2.500C13.200 8 10.500 6 7.500 6 4 6 1.800 7.700 1 10z" fill="url(#edgeTop)" />
        <path d="M8 10c-2 4 0 9 5 10.500 3 .3 5-1.300 6.500-3.500-5 2-10 0-10-4z" fill="#0f4f9c" />
        <path d="M13.200 10.500c0-1-.8-2-2.200-2-1.500 0-2 1.500-1.500 4.500.4 2 2.500 4.500 7.500 4 1-.2 2.500-.8 3-1.500-3 .8-7.500-.5-7.500-2.500 0-.6.700-1 .7-2.500z" fill="#1d2c33" />
      </svg>
    ),
  },
  {
    name: "File Explorer",
    mark: "dot",
    icon: (
      <svg width="21" height="20" viewBox="0 0 21 20" aria-hidden="true">
        <path d="M0 1h7l2 2h12v16H0z" fill="#e0a526" />
        <path d="M0 5h21v14H0z" fill="#fbd558" />
        <path d="M4 12h13v7h-3.500v-3h-6v3H4z" fill="#1b78c4" />
      </svg>
    ),
  },
  {
    name: "Opera GX",
    icon: (
      <svg width="20" height="20" viewBox="0 0 20 20" fill="none" aria-hidden="true">
        <circle cx="10" cy="10" r="9" stroke="#a81e48" strokeWidth="1.600" />
        <ellipse cx="10" cy="10" rx="4.500" ry="8" stroke="#a81e48" strokeWidth="1.600" />
      </svg>
    ),
  },
  {
    name: "Illustrator",
    mark: "dot",
    icon: (
      <span className="flex h-[18px] w-[18px] items-center justify-center rounded-[3px] bg-[#330a04] text-[10px] font-bold text-[#f29a2e]">Ai</span>
    ),
  },
  {
    name: "Proteus",
    mark: "active",
    icon: (
      <svg width="20" height="18" viewBox="0 0 20 18" fill="none" aria-hidden="true">
        <path d="M2 1c0 3 2 4 4 5M18 1c0 3-2 4-4 5M2 17c0-3 2-4 4-5M18 17c0-3-2-4-4-5" stroke="#71829e" strokeWidth="1.300" />
        <path d="M1 8c4-2.500 14-2.500 18 0-1 4.500-17 4.500-18 0z" stroke="#7d8ea8" strokeWidth="1" fill="#33435f" />
        <circle cx="10" cy="9" r="3.400" fill="#2f4f94" stroke="#8fa3c0" />
      </svg>
    ),
  },
  {
    name: "WhatsApp",
    mark: "dot",
    badge: "22",
    icon: (
      <svg width="21" height="21" viewBox="0 0 21 21" aria-hidden="true">
        <path d="M1.500 19.500l1.300-4.700A8.500 8.500 0 1 1 6 18.200z" fill="#1c3a34" stroke="#2fd46a" strokeWidth="2.200" />
        <path d="M7 5.500c-1.500 1-1.500 3 .5 5.500s4.500 4 6.500 3.500c1.500-.5 1.500-2 1.200-2.400L13 11l-1.200 1.300C10.500 12 9 10.500 8.500 9.300L9.500 8 8.500 5.500z" fill="#fff" />
      </svg>
    ),
  },
  {
    name: "Ladybug",
    mark: "dot",
    icon: (
      <svg width="19" height="20" viewBox="0 0 20 20" aria-hidden="true">
        <rect width="20" height="20" fill="#d81e3c" />
        <ellipse cx="10" cy="12.500" rx="5" ry="6" fill="#fff" />
        <circle cx="10" cy="5" r="2.500" fill="#fff" />
        <path d="M7 2l2 2M13 2l-2 2" stroke="#fff" />
        <circle cx="8" cy="11" r="1.300" fill="#d81e3c" />
        <circle cx="12" cy="11" r="1.300" fill="#d81e3c" />
        <circle cx="8" cy="15" r="1.300" fill="#d81e3c" />
        <circle cx="12" cy="15" r="1.300" fill="#d81e3c" />
        <path d="M5.500 8h9" stroke="#d81e3c" />
      </svg>
    ),
  },
  {
    name: "OBS Studio",
    mark: "dot",
    icon: (
      <svg width="21" height="21" viewBox="0 0 21 21" aria-hidden="true">
        <circle cx="10" cy="11" r="8.600" fill="#24282c" stroke="#c8ccd0" strokeWidth="1.500" />
        <path d="M9 4.500c-2 2.500-.5 5 1.500 6.500M16 13.500c-1-3-4-3.300-6-2M5 15c3 .8 5-1.200 5-4" stroke="#c8ccd0" strokeWidth="1.700" fill="none" />
        <circle cx="17" cy="4" r="4" fill="#e01010" />
      </svg>
    ),
  },
];

const Taskbar = () => (
  <footer className="flex h-10 shrink-0 items-center border-t border-[#2f4a52] bg-linear-to-r from-[#232b2e] via-[#1c2d35] to-[#20292e] text-white">
    <div className="flex-1 pl-[23px]" />
    <div className="flex items-center">
      <button aria-label="Start" className="flex w-[24px] justify-center">
        <svg width="19" height="19" viewBox="0 0 20 20" aria-hidden="true">
          <path d="M0 0h9.500v9.500H0zM10.500 0H20v9.500h-9.500zM0 10.500h9.500V20H0zM10.500 10.500H20V20h-9.500z" fill="#54c0f0" />
        </svg>
      </button>
      <label className="ml-[10px] flex h-[27px] w-[182px] items-center rounded-full bg-[#3a434b] pr-[4px] pl-[9px]">
        <Search size={13} strokeWidth={2.2} className="shrink-0 text-[#e6eaec]" />
        <input
          aria-label="Search"
          placeholder="Search"
          className="ml-[8px] min-w-0 flex-1 bg-transparent text-[11px] leading-4 outline-none placeholder:text-[#c4cacd]"
        />
        <svg width="40" height="22" viewBox="0 0 40 22" className="shrink-0" aria-hidden="true">
          <path d="M1 18c3-4 9-3 14-4 6-1 18-1 23 4 1 2-4 3.500-18 3.500S1 21 1 18z" fill="#dcc193" />
          <path d="M6 6l10-2 2 11-10 2z" fill="#f7f3e4" />
          <path d="M14 8l6-6-2 7" fill="#e8b83a" />
          <rect x="25" y="1" width="9" height="18" rx="4" fill="#1f7fe0" />
          <path d="M25 9h9M25 14h9" stroke="#1560b4" />
        </svg>
      </label>
      <div className="ml-[3px] flex">
        {apps.map((a) => (
          <button key={a.name} aria-label={a.name} className="relative flex h-9 w-[37px] items-center justify-center nth-[3n]:w-[36px]">
            {a.mark === "active" && <span className="absolute inset-x-[2px] inset-y-[1px] rounded bg-[#2a3a45]" />}
            <span className="relative">{a.icon}</span>
            {a.mark === "dot" && <span className="absolute bottom-0 h-[2px] w-[5px] rounded-full bg-[#a8b0b4]" />}
            {a.mark === "active" && <span className="absolute bottom-0 h-[2px] w-[13px] rounded-full bg-[#cfe0ea]" />}
            {a.badge && (
              <span className="absolute top-[3px] right-[3px] rounded-full bg-[#b7d3d8] px-[2px] text-[9px] leading-[13px] text-[#1a2a30]">{a.badge}</span>
            )}
          </button>
        ))}
      </div>
    </div>
    <div className="flex flex-1 items-center justify-end pr-[17px]">
      <button aria-label="Hidden icons" className="mr-[15px]"><ChevronUp size={12} strokeWidth={2.5} /></button>
      <button aria-label="Microphone" className="mr-[13px]"><Mic size={13} strokeWidth={2} /></button>
      <button aria-label="Touch keyboard" className="mr-[14px]"><Keyboard size={15} strokeWidth={2} /></button>
      <button className="mr-[15px] text-[10px] leading-4">ENG</button>
      <button aria-label="Network, sound and battery" className="mr-[12px] flex items-center gap-[6px]">
        <Wifi size={14} strokeWidth={2.4} />
        <VolumeX size={14} strokeWidth={2} />
        <svg width="14" height="12" viewBox="0 0 14 12" aria-hidden="true">
          <path d="M2 4h9.500v6.500H2zM12 6h1.500v2.500H12z" fill="#fff" />
          <path d="M0 0l4 2.500L2 5z" fill="#fff" />
        </svg>
      </button>
      <time className="text-right text-[10px] leading-[13px]">
        7:52 PM
        <br />
        22/1/2024
      </time>
      <button aria-label="Notifications" className="ml-[7px]">
        <svg width="12" height="14" viewBox="0 0 12 14" aria-hidden="true">
          <path d="M6 1C3.500 1 2 3 2 5v3.500L.5 11h11L10 8.500V5c0-2-1.500-4-4-4zM4.500 12h3c0 2-3 2-3 0z" fill="#fff" />
          <path d="M5 4.500h3L5 8h3" stroke="#20292e" fill="none" />
        </svg>
      </button>
    </div>
  </footer>
);

export default function App() {
  return (
    <div className="flex min-h-screen flex-col overflow-x-hidden bg-[#e1eef0] font-['Open_Sans',sans-serif]">
      <div className="flex flex-1 flex-col border-x border-black">
        <TitleBar />
        <MenuBar />
        <div className="flex h-[23px] gap-[2px] bg-[#e8f2f3] pl-[2px]">
          <ToolGroup tools={groupA} box="w-[316px] pl-[3px] pr-[3px]" />
          <ToolGroup tools={groupB} box="w-[193px] pl-[6px] pr-[3px]" />
          <ToolGroup tools={groupC} box="w-[304px] pl-[4px] pr-[6px]" />
          <ToolGroup tools={groupD} box="w-[172px] pl-[4px] pr-[3px]" />
        </div>
        <TabStrip />
        <main className="flex flex-1 border-t-2 border-[#b5d3db]">
          <ModeBar />
          <SidePanel />
          <div className="ml-px flex min-w-0 flex-1 border-y border-r-2 border-l border-[#7796a0]">
            <Schematic />
          </div>
        </main>
        <StatusBar />
      </div>
      <Taskbar />
    </div>
  );
}
